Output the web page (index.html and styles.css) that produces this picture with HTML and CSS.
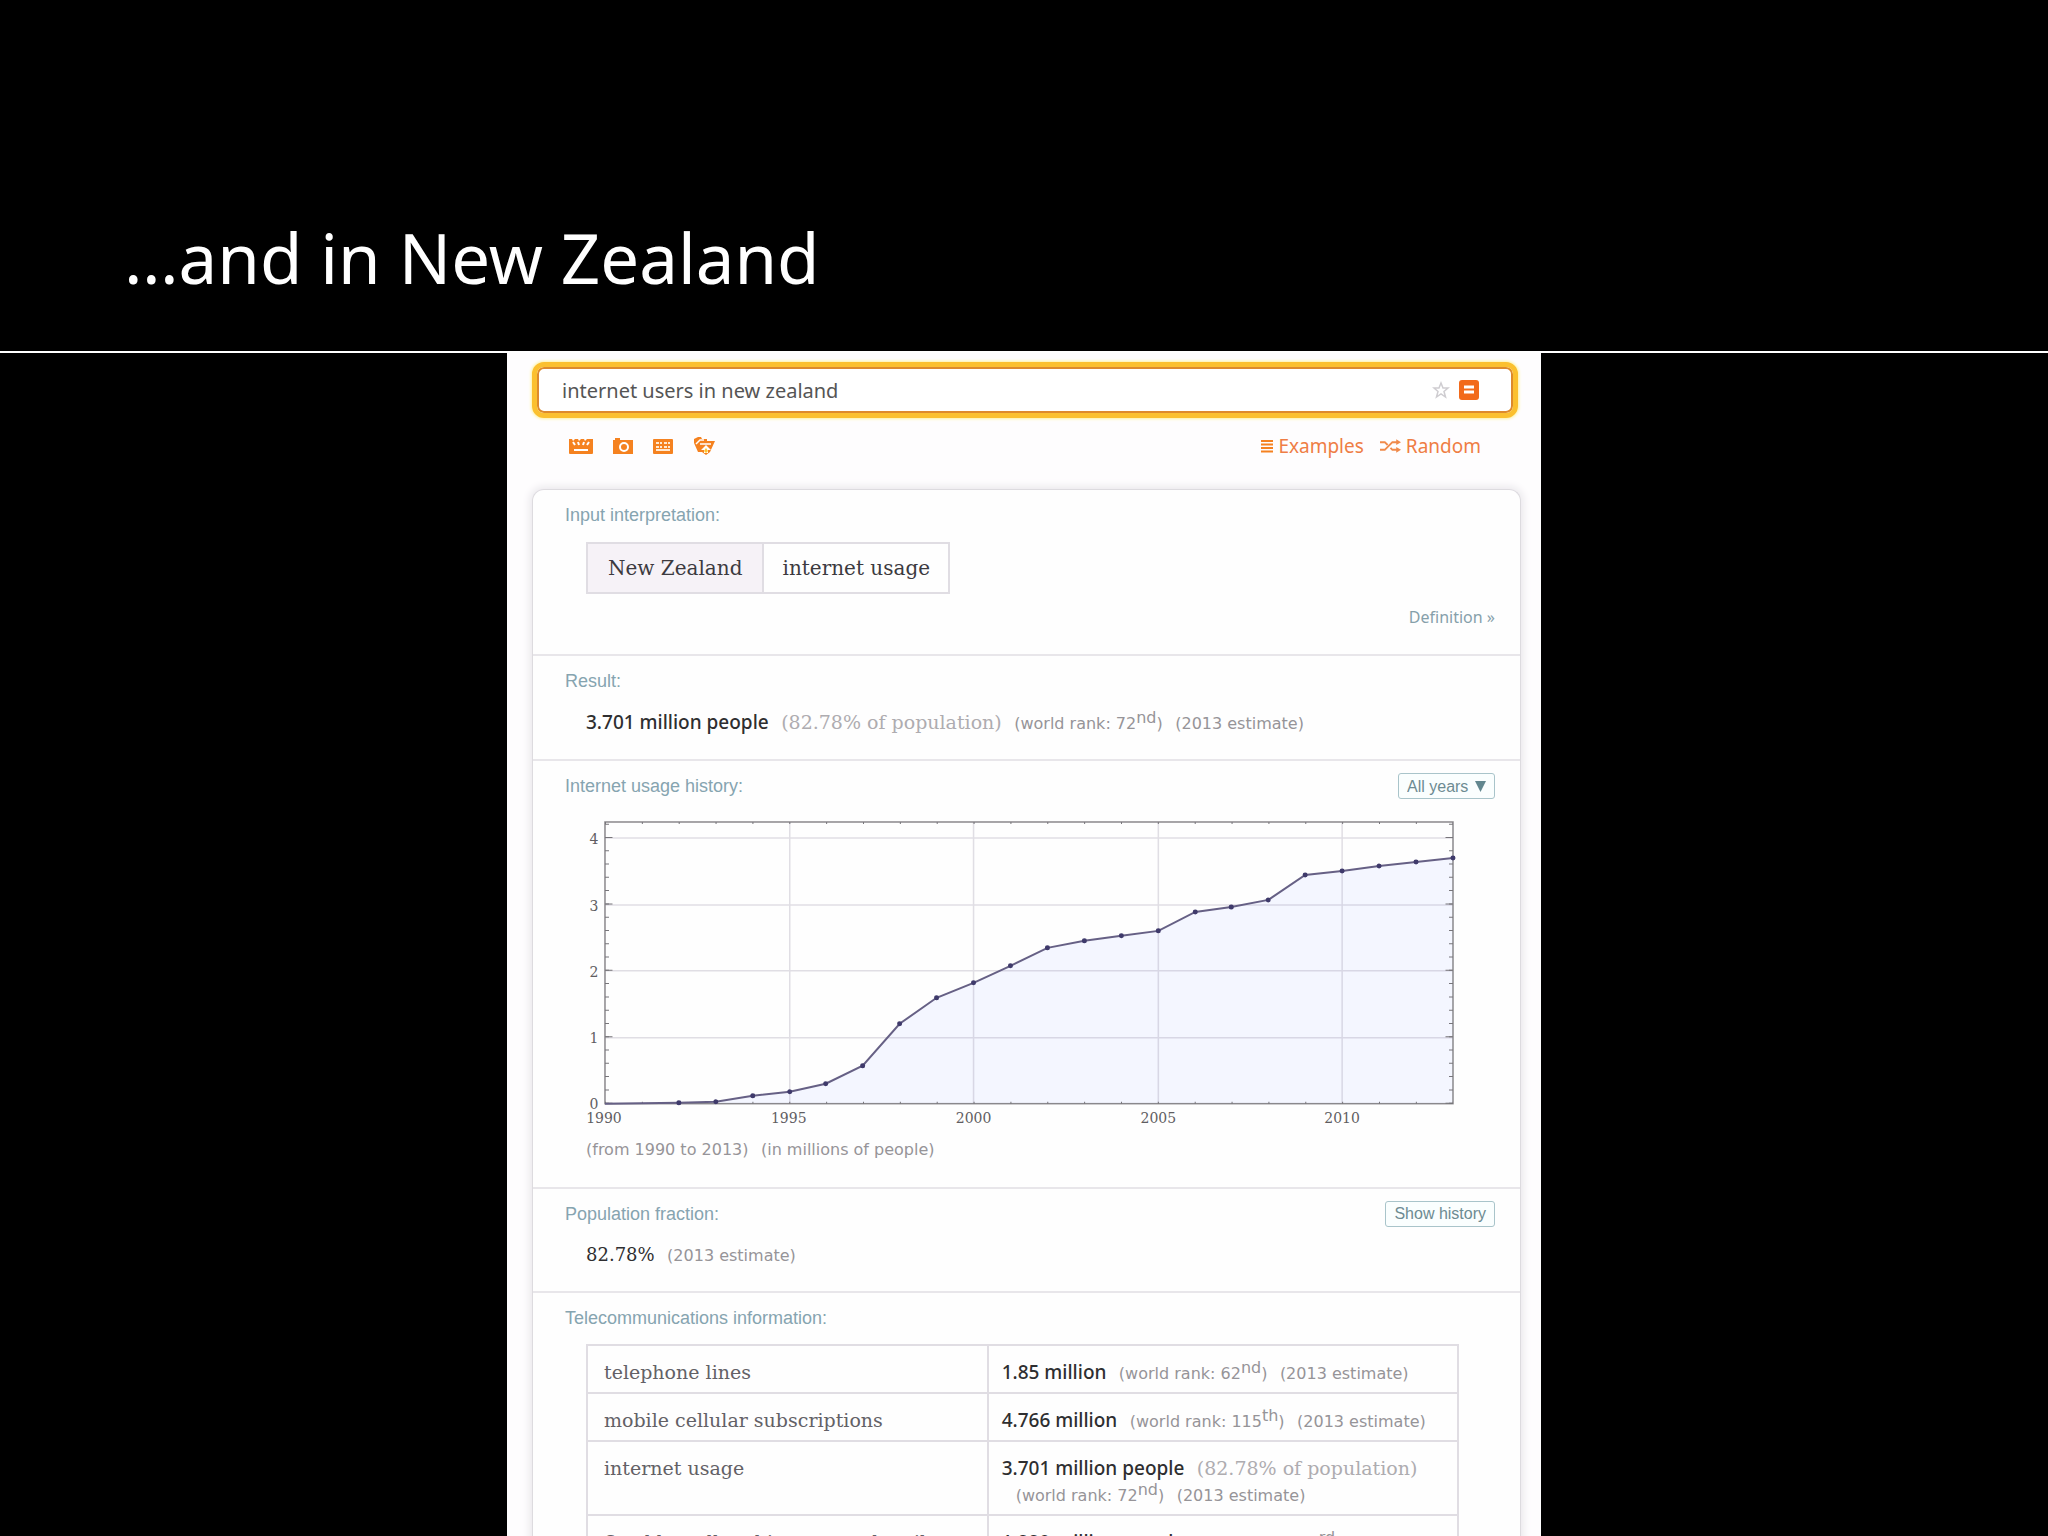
FILE: index.html
```html
<!DOCTYPE html>
<html lang="en">
<head>
    <meta charset="UTF-8">
    <meta name="viewport" content="width=device-width, initial-scale=1.0">
    <title>…and in New Zealand</title>
    <link rel="stylesheet" href="styles.css">
</head>
<body>

<header class="slide-header">
    <h1>…and in New Zealand</h1>
</header>

<main class="panel">
    <form class="search-box">
        <input type="text" class="search-input" aria-label="Search" value="internet users in new zealand">
        <button type="button" class="icon-btn" aria-label="Add to favorites">
            <svg width="18" height="18" viewBox="0 0 18 18"><path d="M9 2l2 5h5l-4 3.500 1.500 5.500L9 12.800 4.500 16 6 10.500 2 7h5z" fill="#fff" stroke="#cfcdd1" stroke-width="1.500"/></svg>
        </button>
        <button type="submit" class="icon-btn" aria-label="Compute">
            <svg width="20" height="20" viewBox="0 0 20 20"><rect width="20" height="20" rx="3" fill="#f26a1b"/><path d="M5 7h10M5 12h10" stroke="#fff" stroke-width="3"/></svg>
        </button>
    </form>

    <nav class="toolbar">
        <div class="input-tools">
            <a href="#" aria-label="Extended keyboard">
                <svg width="26" height="22" viewBox="0 0 26 22"><path d="M1 4h3l1 2 2-2h3l1 2 2-2h3l1 2 2-2h6v14q0 1-1 1H2q-1 0-1-1z" fill="#f58220"/><path d="M5 7l2 3M10 7l1 3M16 7l-1 3M21 7l-2 3M6 15h14" stroke="#fff" stroke-width="2"/></svg>
            </a>
            <a href="#" aria-label="Image input">
                <svg width="22" height="22" viewBox="0 0 22 22"><path d="M1 5h2V3h5v2h13v14H1z" fill="#f58220"/><circle cx="12" cy="12" r="4" fill="none" stroke="#fff" stroke-width="2"/></svg>
            </a>
            <a href="#" aria-label="Data input">
                <svg width="22" height="22" viewBox="0 0 22 22"><rect x="1" y="4" width="20" height="15" rx="1" fill="#f58220"/><path d="M4 8h3M8 8h2M12 8h3M16 8h2M4 12h3M8 12h2M12 12h3M16 12h2M4 15h14" stroke="#ffe9d2" stroke-width="2"/></svg>
            </a>
            <a href="#" aria-label="File upload">
                <svg width="24" height="22" viewBox="0 0 24 22"><path d="M2 8V4l4-2h3l1 2h5v2h8l-5 11-4 3-4-3H6z" fill="#f58220"/><path d="M4 9l4-4h4M8 9h11" stroke="#fff" stroke-width="1.500" fill="none"/><path d="M14 10l5 5h-3v3h-4v-3H9z" fill="#fff"/><path d="M14 13l2 3-2 2-2-2z" fill="#ffc52e"/></svg>
            </a>
        </div>
        <div class="links">
            <a href="#">
                <svg width="13" height="14" viewBox="0 0 13 14"><path d="M1 2h12M1 5.500h12M1 9h12M1 12.500h12" stroke="#f58220" stroke-width="2"/></svg>
                Examples
            </a>
            <a href="#">
                <svg width="21" height="14" viewBox="0 0 22 14"><path d="M0 3h5l3 3M0 11h5l8-8h5M11 9l2 2h5" stroke="#f08a4b" stroke-width="2" fill="none"/><path d="M17 0l5 3-5 3zM17 8l5 3-5 3z" fill="#f08a4b"/></svg>
                Random
            </a>
        </div>
    </nav>

    <div class="results">
        <section class="pod">
            <h2>Input interpretation:</h2>
            <div class="interpretation">
                <span class="entity">New Zealand</span>
                <span>internet usage</span>
            </div>
            <a class="definition" href="#">Definition »</a>
        </section>

        <section class="pod">
            <h2>Result:</h2>
            <p class="value">
                <strong>3.701 million people</strong>
                <span class="fraction">(82.78% of population)</span>
                <small>(world rank: 72<sup>nd</sup>)</small>
                <small>(2013 estimate)</small>
            </p>
        </section>

        <section class="pod">
            <div class="pod-head">
                <h2>Internet usage history:</h2>
                <label class="pod-btn">
                    <select aria-label="Year range">
                        <option>All years</option>
                    </select>
                    <svg width="11" height="11" viewBox="0 0 11 11"><path d="M0 0h11L5.500 11z" fill="#62878f"/></svg>
                </label>
            </div>
            <svg class="chart" viewBox="0 0 874 310" role="img" aria-label="Internet users in New Zealand, 1990 to 2013">
                <path class="area" d="M19 288L93 287L130 286L167 280L204 276L240 268L277 250L314 208L351 182L388 167L425 150L462 132L499 125L536 120L573 115L610 96L646 91L683 84L720 59L757 55L794 50L831 46L868 42V288z"/>
                <path class="grid" d="M204 6V288M388 6V288M573 6V288M757 6V288M19 22H868M19 89H868M19 155H868M19 222H868"/>
                <rect class="frame" x="19" y="6" width="849" height="282"/>
                <!-- minor ticks every 0.2, major ticks every 1 -->
                <path class="ticks minor" d="M21 288V6M866 288V6"/>
                <path class="ticks major" d="M23 288V6M864 288V6"/>
                <path class="ticks years" d="M19 7H868M19 287H868"/>
                <path class="series" d="M19 288L93 287L130 286L167 280L204 276L240 268L277 250L314 208L351 182L388 167L425 150L462 132L499 125L536 120L573 115L610 96L646 91L683 84L720 59L757 55L794 50L831 46L868 42"/>
                <path class="points" d="M93 287h0M130 286h0M167 280h0M204 276h0M240 268h0M277 250h0M314 208h0M351 182h0M388 167h0M425 150h0M462 132h0M499 125h0M536 120h0M573 115h0M610 96h0M646 91h0M683 84h0M720 59h0M757 55h0M794 50h0M831 46h0M868 42h0"/>
                <g class="labels">
                    <text x="8" y="28">4</text>
                    <text x="8" y="95">3</text>
                    <text x="8" y="161">2</text>
                    <text x="8" y="227">1</text>
                    <text x="8" y="293">0</text>
                    <text x="18" y="307">1990</text>
                    <text x="203" y="307">1995</text>
                    <text x="388" y="307">2000</text>
                    <text x="573" y="307">2005</text>
                    <text x="757" y="307">2010</text>
                </g>
            </svg>
            <p class="value caption">
                <small>(from 1990 to 2013)</small>
                <small>(in millions of people)</small>
            </p>
        </section>

        <section class="pod">
            <div class="pod-head">
                <h2>Population fraction:</h2>
                <button type="button" class="pod-btn">Show history</button>
            </div>
            <p class="value">
                <strong class="number">82.78%</strong>
                <small>(2013 estimate)</small>
            </p>
        </section>

        <section class="pod">
            <h2>Telecommunications information:</h2>
            <table class="telecom">
                <tr>
                    <th scope="row">telephone lines</th>
                    <td><strong>1.85 million</strong> <small>(world rank: 62<sup>nd</sup>)</small> <small>(2013 estimate)</small></td>
                </tr>
                <tr>
                    <th scope="row">mobile cellular subscriptions</th>
                    <td><strong>4.766 million</strong> <small>(world rank: 115<sup>th</sup>)</small> <small>(2013 estimate)</small></td>
                </tr>
                <tr>
                    <th scope="row">internet usage</th>
                    <td>
                        <strong>3.701 million people</strong> <span class="fraction">(82.78% of population)</span>
                        <div class="note"><small>(world rank: 72<sup>nd</sup>)</small> <small>(2013 estimate)</small></div>
                    </td>
                </tr>
                <tr>
                    <th scope="row">fixed broadband internet subscribers</th>
                    <td>
                        <strong>1.229 million people</strong> <small>(world rank: 53<sup>rd</sup>)</small>
                        <div class="note"><small>(2013 estimate)</small></div>
                    </td>
                </tr>
            </table>
        </section>
    </div>
</main>

</body>
</html>
```
FILE: styles.css
```css
* {
    box-sizing: border-box;
}

html, body {
    margin: 0;
    padding: 0;
    height: 100%;
}

body {
    background: #000;
    overflow: hidden;
    font-family: "Liberation Sans", Arial, sans-serif;
}

a {
    text-decoration: none;
}

svg {
    display: block;
}

.slide-header {
    padding: 206px 124px 43px;
    border-bottom: 2px solid #fff;
}

.slide-header h1 {
    margin: 0;
    color: #fff;
    font-family: "Noto Sans", sans-serif;
    font-size: 69px;
    line-height: 102px;
    font-weight: 400;
}

.panel {
    width: 1034px;
    max-width: 100%;
    margin: 0 auto;
    padding: 9px 20px 0 25px;
    background: #fefdfe;
}

.search-box {
    display: flex;
    align-items: center;
    gap: 9px;
    margin-right: 3px;
    height: 56px;
    padding: 0 34px 0 25px;
    background: #fff;
    border: 5px solid #fbc02f;
    border-radius: 12px;
    box-shadow: inset 0 0 0 2px #dd8a2c, 0 0 3px 1px #fdf2a0;
}

.search-input {
    flex: 1;
    min-width: 0;
    padding: 0;
    border: 0;
    outline: none;
    background: transparent;
    color: #555;
    font-family: "Noto Sans", sans-serif;
    font-size: 20px;
}

.icon-btn {
    padding: 0;
    border: 0;
    background: none;
}

.toolbar {
    display: flex;
    justify-content: space-between;
    align-items: center;
    height: 55px;
    padding: 0 40px 0 36px;
}

.input-tools {
    display: flex;
    align-items: center;
    gap: 18px;
}

.links {
    display: flex;
    align-items: center;
    gap: 16px;
}

.links a {
    display: flex;
    align-items: center;
    gap: 5px;
    color: #ef7d45;
    font-family: "Noto Sans", sans-serif;
    font-size: 19px;
}

.results {
    margin-top: 16px;
    background: #fefefe;
    border: 1px solid #dddbdf;
    border-bottom: 0;
    border-radius: 12px 12px 0 0;
    box-shadow: 0 0 8px 2px #e8e6ea;
}

.pod {
    padding: 13px 61px 22px 53px;
    border-bottom: 2px solid #e8e6ea;
}

.pod h2 {
    margin: 0 0 0 -21px;
    color: #86a4b0;
    font-size: 18px;
    line-height: 24px;
    font-weight: 400;
}

.pod-head {
    display: flex;
    justify-content: space-between;
    align-items: center;
    height: 24px;
    margin-right: -36px;
}

.pod-btn {
    display: flex;
    align-items: center;
    gap: 6px;
    height: 26px;
    padding: 0 8px;
    background: #fafefe;
    border: 1px solid #a9c4ca;
    border-radius: 3px;
    color: #6d8b92;
    font-family: "Liberation Sans", Arial, sans-serif;
    font-size: 16px;
}

.pod-btn select {
    appearance: none;
    padding: 0;
    border: 0;
    background: none;
    color: inherit;
    font: inherit;
}

.interpretation {
    display: flex;
    width: fit-content;
    margin-top: 15px;
    border: 2px solid #e0dde3;
    color: #3c3a3f;
    font-family: "DejaVu Serif", serif;
    font-size: 20px;
    line-height: 48px;
}

.interpretation span {
    padding: 0 18px;
}

.interpretation .entity {
    padding: 0 20px;
    background: #f6f2f7;
    border-right: 2px solid #e0dde3;
}

.definition {
    display: block;
    margin: 12px -36px 4px 0;
    color: #86a0aa;
    font-family: "Noto Sans", sans-serif;
    font-size: 16px;
    line-height: 22px;
    text-align: right;
}

.value {
    margin: 16px 0 0;
    line-height: 26px;
}

.caption {
    margin: 11px 0 2px;
}

strong {
    margin-right: 8px;
    color: #2e2e30;
    font-family: "Noto Sans", sans-serif;
    font-size: 19px;
    font-weight: 500;
}

.number {
    font-family: "DejaVu Serif", serif;
    font-size: 18px;
}

.fraction {
    margin-right: 8px;
    color: #aeacb0;
    font-family: "DejaVu Serif", serif;
    font-size: 19px;
}

small {
    margin-right: 8px;
    color: #969498;
    font-family: "DejaVu Sans", sans-serif;
    font-size: 16px;
    white-space: nowrap;
}

sup {
    font-size: 16px;
    line-height: 0;
}

.chart {
    width: 100%;
    margin-top: 18px;
}

.area {
    fill: #f4f6ff;
}

.grid {
    fill: none;
    stroke: #5a5070;
    stroke-opacity: 0.18;
    stroke-width: 1.5;
}

.frame {
    fill: none;
    stroke: #8a888c;
    stroke-width: 1.5;
}

.ticks {
    fill: none;
    stroke: #77757a;
}

.minor {
    stroke-width: 4;
    stroke-dasharray: 1 12.3;
}

.major {
    stroke-width: 7;
    stroke-dasharray: 1 65.5;
}

.years {
    stroke-width: 2;
    stroke-dasharray: 1 35.9;
}

.series {
    fill: none;
    stroke: #666085;
    stroke-width: 2;
}

.points {
    stroke: #3f3a6b;
    stroke-width: 5;
    stroke-linecap: round;
}

.labels {
    fill: #5f5d61;
    font-family: "DejaVu Serif", serif;
    font-size: 14px;
    text-anchor: middle;
}

.telecom {
    width: 100%;
    margin-top: 14px;
    border-collapse: collapse;
}

.telecom th, .telecom td {
    padding: 13px 13px 5px;
    border: 2px solid #e0dde3;
    line-height: 26px;
    text-align: left;
    vertical-align: top;
}

.telecom th {
    width: 46%;
    padding-left: 16px;
    color: #636166;
    font-family: "DejaVu Serif", serif;
    font-size: 19px;
    font-weight: 400;
}

.telecom td {
    white-space: nowrap;
}

.note {
    padding-left: 14px;
}
```
